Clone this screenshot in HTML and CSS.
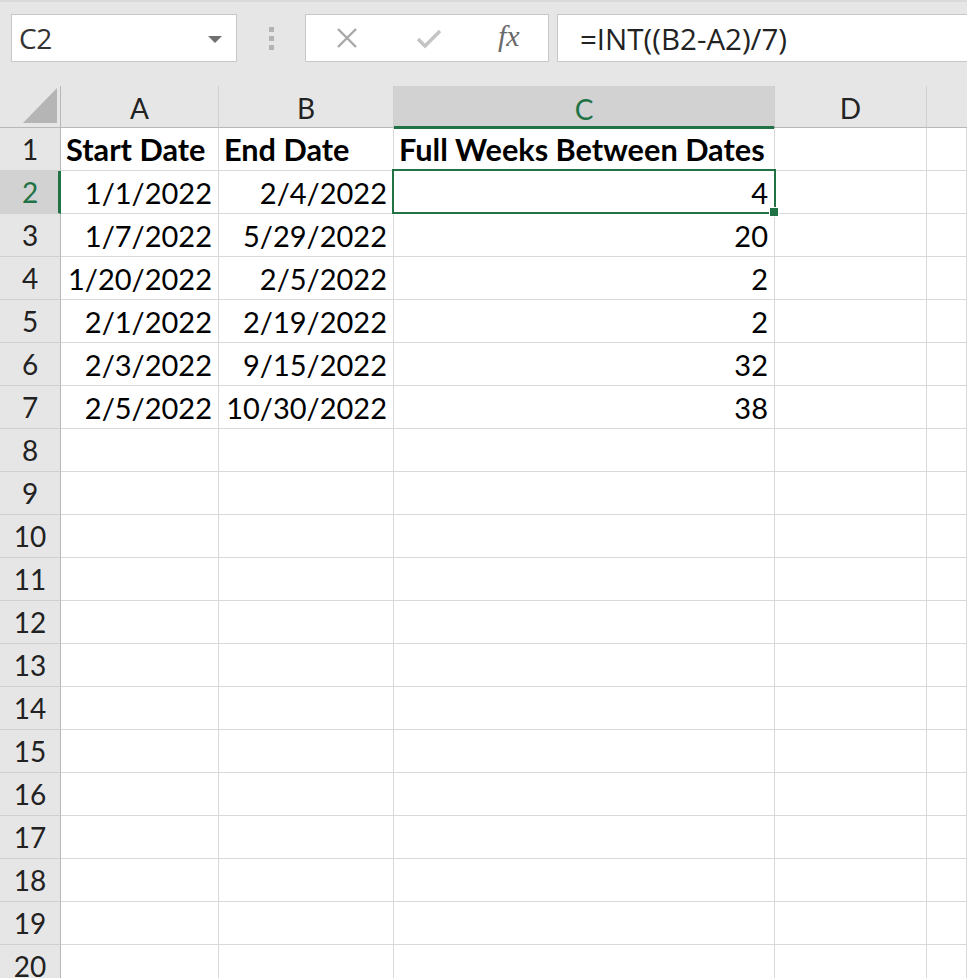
FILE: index.html
```html
<!DOCTYPE html>
<html>
<head>
<meta charset="utf-8">
<link rel="stylesheet" href="styles.css">
</head>
<body>
<div class="toolbar">
  <div class="namebox">
    <span class="name">C2</span>
    <span class="caret"></span>
  </div>
  <div class="grip"><span></span><span></span><span></span></div>
  <div class="fxbox">
    <svg class="ico-x" width="22" height="22" viewBox="0 0 22 22"><path d="M2 2 L20 20 M20 2 L2 20" stroke="#a8a8a8" stroke-width="2.4" fill="none"/></svg>
    <svg class="ico-check" width="26" height="22" viewBox="0 0 26 22"><path d="M2 11 L9 18 L24 3" stroke="#c4c4c4" stroke-width="3.4" fill="none"/></svg>
    <span class="fx">fx</span>
  </div>
  <div class="formula">=INT((B2-A2)/7)</div>
</div>
<div class="sheet">
  <div class="corner"><span class="tri"></span></div>
  <div class="ch">A</div>
  <div class="ch">B</div>
  <div class="ch sel">C</div>
  <div class="ch">D</div>
  <div class="ch last"></div>

  <div class="rh">1</div>
  <div class="c b">Start Date</div>
  <div class="c b">End Date</div>
  <div class="c b">Full Weeks Between Dates</div>
  <div class="c"></div><div class="c"></div>

  <div class="rh sel">2</div>
  <div class="c r">1/1/2022</div>
  <div class="c r">2/4/2022</div>
  <div class="c r active">4</div>
  <div class="c"></div><div class="c"></div>

  <div class="rh">3</div>
  <div class="c r">1/7/2022</div>
  <div class="c r">5/29/2022</div>
  <div class="c r">20</div>
  <div class="c"></div><div class="c"></div>

  <div class="rh">4</div>
  <div class="c r">1/20/2022</div>
  <div class="c r">2/5/2022</div>
  <div class="c r">2</div>
  <div class="c"></div><div class="c"></div>

  <div class="rh">5</div>
  <div class="c r">2/1/2022</div>
  <div class="c r">2/19/2022</div>
  <div class="c r">2</div>
  <div class="c"></div><div class="c"></div>

  <div class="rh">6</div>
  <div class="c r">2/3/2022</div>
  <div class="c r">9/15/2022</div>
  <div class="c r">32</div>
  <div class="c"></div><div class="c"></div>

  <div class="rh">7</div>
  <div class="c r">2/5/2022</div>
  <div class="c r">10/30/2022</div>
  <div class="c r">38</div>
  <div class="c"></div><div class="c"></div>

  <div class="rh">8</div><div class="c"></div><div class="c"></div><div class="c"></div><div class="c"></div><div class="c"></div>
  <div class="rh">9</div><div class="c"></div><div class="c"></div><div class="c"></div><div class="c"></div><div class="c"></div>
  <div class="rh">10</div><div class="c"></div><div class="c"></div><div class="c"></div><div class="c"></div><div class="c"></div>
  <div class="rh">11</div><div class="c"></div><div class="c"></div><div class="c"></div><div class="c"></div><div class="c"></div>
  <div class="rh">12</div><div class="c"></div><div class="c"></div><div class="c"></div><div class="c"></div><div class="c"></div>
  <div class="rh">13</div><div class="c"></div><div class="c"></div><div class="c"></div><div class="c"></div><div class="c"></div>
  <div class="rh">14</div><div class="c"></div><div class="c"></div><div class="c"></div><div class="c"></div><div class="c"></div>
  <div class="rh">15</div><div class="c"></div><div class="c"></div><div class="c"></div><div class="c"></div><div class="c"></div>
  <div class="rh">16</div><div class="c"></div><div class="c"></div><div class="c"></div><div class="c"></div><div class="c"></div>
  <div class="rh">17</div><div class="c"></div><div class="c"></div><div class="c"></div><div class="c"></div><div class="c"></div>
  <div class="rh">18</div><div class="c"></div><div class="c"></div><div class="c"></div><div class="c"></div><div class="c"></div>
  <div class="rh">19</div><div class="c"></div><div class="c"></div><div class="c"></div><div class="c"></div><div class="c"></div>
  <div class="rh">20</div><div class="c"></div><div class="c"></div><div class="c"></div><div class="c"></div><div class="c"></div>
</div>
</body>
</html>
```

FILE: styles.css
```css
* { box-sizing: border-box; }
html, body { margin: 0; padding: 0; overflow: hidden; background: #fff; }
body { width: 967px; height: 978px; }

.toolbar {
  height: 86px;
  background: #e6e6e6;
  border-top: 2px solid #dadada;
  display: flex;
  align-items: flex-start;
  padding-top: 12px;
  padding-left: 11px;
  font-family: "Open Sans", "Noto Sans", sans-serif;
}
.namebox {
  width: 226px;
  height: 48px;
  background: #fff;
  border: 1px solid #c8c8c8;
  display: flex;
  align-items: center;
  justify-content: space-between;
  padding: 0 14px 0 7px;
}
.name { font-size: 28px; color: #333; letter-spacing: -0.3px; }
.caret {
  width: 0; height: 0;
  border-left: 7px solid transparent;
  border-right: 7px solid transparent;
  border-top: 7px solid #707070;
  margin-top: 2px;
}
.grip {
  width: 68px;
  height: 48px;
  display: flex;
  flex-direction: column;
  align-items: center;
  justify-content: center;
  gap: 4px;
}
.grip span { width: 5px; height: 5px; background: #b3b3b3; }
.fxbox {
  width: 244px;
  height: 48px;
  background: #fff;
  border: 1px solid #c8c8c8;
  display: flex;
  align-items: center;
  padding-left: 30px;
}
.ico-x { margin-right: 58px; }
.ico-check { margin-right: 56px; margin-top: 2px; }
.fx {
  font-family: "Liberation Serif", "DejaVu Serif", serif;
  font-style: italic;
  font-size: 30px;
  color: #6a6a6a;
  margin-top: -4px;
}
.formula {
  margin-left: 8px;
  flex: 1;
  height: 48px;
  background: #fff;
  border: 1px solid #c8c8c8;
  border-right: none;
  display: flex;
  align-items: center;
  padding-left: 22px;
  font-size: 29.5px;
  color: #222;
}

.sheet {
  display: grid;
  grid-template-columns: 61px 158px 175px 381px 152px 40px;
  grid-template-rows: 42px repeat(20, 43px);
  font-family: Lato, "Open Sans", sans-serif;
}
.corner {
  background: #e6e6e6;
  border-right: 1px solid #b8b8b8;
  border-bottom: 1px solid #b8b8b8;
  position: relative;
}
.tri {
  position: absolute;
  right: 3px;
  bottom: 4px;
  width: 0; height: 0;
  border-left: 34px solid transparent;
  border-bottom: 35px solid #b5b5b5;
}
.ch {
  background: #e6e6e6;
  border-right: 1px solid #d0d0d0;
  border-bottom: 1px solid #b8b8b8;
  display: flex;
  align-items: center;
  justify-content: center;
  font-size: 28px;
  color: #222;
  padding-top: 2px;
}
.ch.sel {
  background: #d2d2d2;
  color: #217346;
  border-bottom: 3px solid #217346;
  padding-top: 5px;
  margin-bottom: -1px;
}
.ch.last { border-right: none; }
.rh {
  background: #e6e6e6;
  border-right: 1px solid #b8b8b8;
  border-bottom: 1px solid #d0d0d0;
  display: flex;
  align-items: center;
  justify-content: center;
  font-size: 28px;
  color: #222;
}
.rh.sel {
  background: #d2d2d2;
  color: #217346;
  border-right: 3px solid #217346;
  padding-left: 2px;
}
.c {
  border-right: 1px solid #d9d9d9;
  border-bottom: 1px solid #d9d9d9;
  display: flex;
  align-items: center;
  padding: 0 6px 0 5px;
  font-size: 29px;
  color: #000;
  white-space: nowrap;
}
.c.b { font-weight: bold; font-size: 30.7px; padding-left: 5px; }
.c.r { justify-content: flex-end; }
.active { position: relative; }
.active::after {
  content: "";
  position: absolute;
  left: -2px; top: -2px; right: -2px; bottom: -1px;
  border: 2px solid #217346;
}
.active::before {
  content: "";
  position: absolute;
  right: -5px; bottom: -4px;
  width: 8px; height: 8px;
  background: #217346;
  border: 1px solid #fff;
  z-index: 2;
}
```
